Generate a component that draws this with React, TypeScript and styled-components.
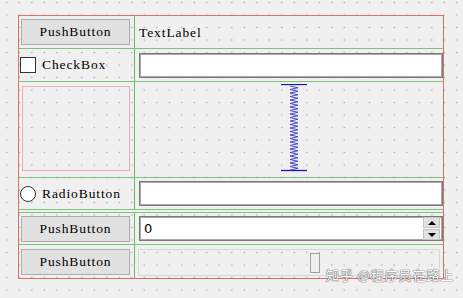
import { FunctionComponent } from "react";
import styled, { createGlobalStyle } from "styled-components";

const GlobalStyle = createGlobalStyle`
    html, body {
        margin: 0;
        padding: 0;
    }

    body {
        width: 463px;
        height: 298px;
        overflow: hidden;
        background-color: #f0f0f0;
        background-image: radial-gradient(circle, #b4b4b4 0.7px, transparent 1.1px);
        background-size: 12.5px 12.5px;
        background-position: 0.55px -3.75px;
        font-family: "Liberation Serif", "DejaVu Serif", serif;
        font-size: 13.5px;
        letter-spacing: 0.9px;
        color: #000000;
    }
`;

const Canvas = styled.div`
    position: relative;
    width: 463px;
    height: 298px;
    padding: 15px 0 0 18px;
    box-sizing: border-box;
`;

const FormLayout = styled.div`
    width: 426px;
    box-sizing: border-box;
    border: 1px solid #e06c6c;
    display: flex;
    flex-direction: column;
`;

const FormRow = styled.div<{ $height: number; $top?: boolean; $bottom?: boolean; $gap?: number }>`
    display: grid;
    grid-template-columns: 116px 1fr;
    height: ${p => p.$height}px;
    box-sizing: border-box;
    margin-top: ${p => p.$gap ?? 0}px;
    border-top: ${p => (p.$top ? "1px solid #7cc47c" : "none")};
    border-bottom: ${p => (p.$bottom ? "1px solid #7cc47c" : "none")};
`;

const LabelCell = styled.div<{ $padTop?: number }>`
    display: flex;
    align-items: ${p => (p.$padTop ? "flex-start" : "center")};
    padding: ${p => p.$padTop ?? 0}px 3px 0 2px;
    box-sizing: border-box;
    border-right: 1px solid #6ab86a;
`;

const FieldCell = styled.div<{ $padTop?: number; $center?: boolean }>`
    display: flex;
    align-items: ${p => (p.$padTop !== undefined ? "flex-start" : "center")};
    justify-content: ${p => (p.$center ? "center" : "flex-start")};
    padding-top: ${p => p.$padTop ?? 0}px;
    padding-left: 4px;
    box-sizing: border-box;
`;

const PushButton = styled.div`
    width: 109px;
    height: 26px;
    box-sizing: border-box;
    display: flex;
    align-items: center;
    justify-content: center;
    background: #e1e1e1;
    border: 1px solid #adadad;
`;

const TextLabel = styled.span`
    padding-top: 1px;
`;

const CheckRow = styled.label`
    display: flex;
    align-items: center;
    gap: 6px;
    margin-left: -1px;
`;

const CheckBox = styled.span`
    width: 16px;
    height: 16px;
    box-sizing: border-box;
    background: #ffffff;
    border: 1px solid #333333;
`;

const Radio = styled.span`
    width: 16px;
    height: 16px;
    box-sizing: border-box;
    background: #ffffff;
    border: 1px solid #333333;
    border-radius: 50%;
`;

const LineEdit = styled.div`
    flex: 1;
    height: 25px;
    box-sizing: border-box;
    background: #ffffff;
    border: 1px solid #7a7a7a;
    box-shadow: inset 0 0 0 1px #a9a9a9;
    display: flex;
    align-items: center;
    padding-left: 4px;
    font-family: "DejaVu Sans", sans-serif;
    font-size: 13px;
    letter-spacing: 0;
`;

const SpinBox = styled(LineEdit)`
    justify-content: space-between;
    padding-right: 2px;
`;

const SpinButtons = styled.div`
    display: flex;
    flex-direction: column;
    gap: 1px;
`;

const SpinArrow = styled.span<{ $down?: boolean }>`
    width: 15px;
    height: 9px;
    background: #e1e1e1;
    border: 1px solid #c4c4c4;
    display: flex;
    align-items: center;
    justify-content: center;

    &::after {
        content: "";
        border-left: 4px solid transparent;
        border-right: 4px solid transparent;
        border-bottom: ${p => (p.$down ? "none" : "4px solid #000")};
        border-top: ${p => (p.$down ? "4px solid #000" : "none")};
    }
`;

const EmptyLayout = styled.div`
    width: 108px;
    height: 85px;
    margin-left: 1px;
    box-sizing: border-box;
    border: 1px solid #efb0b0;
`;

const Slider = styled.div`
    flex: 1;
    height: 27px;
    margin: 0 3px 0 -1px;
    box-sizing: border-box;
    border: 1px solid #d8d8d8;
    display: flex;
    align-items: center;
    justify-content: center;
`;

const SliderHandle = styled.span`
    width: 10px;
    height: 20px;
    margin-left: 52px;
    box-sizing: border-box;
    border: 1px solid #a0a0a0;
    background: #f0f0f0;
`;

const Watermark = styled.div`
    position: absolute;
    left: 326px;
    top: 265px;
    font-family: "Noto Sans CJK SC", sans-serif;
    font-size: 13px;
    color: #ffffff;
    text-shadow: 0 0 1px #666666, 0 0 1px #666666, 0 0 1px #666666;
    white-space: nowrap;
`;

const VerticalSpacer: FunctionComponent = () => {
    const coils = [];
    for (let y = 2; y < 84; y += 3.5) {
        coils.push(`M9 ${y} L17 ${y + 1.75} L9 ${y + 3.5}`);
    }
    return (
        <svg width="26" height="88" viewBox="0 0 26 88" style={{ marginLeft: 6 }}>
            <line x1="0" y1="0.5" x2="26" y2="0.5" stroke="#1a1aa8" strokeWidth="1.3" />
            <line x1="0" y1="86.5" x2="26" y2="86.5" stroke="#1a1aa8" strokeWidth="1.3" />
            <path d={coils.join(" ")} fill="none" stroke="#3a3ac8" strokeWidth="0.9" />
        </svg>
    );
};

const App: FunctionComponent = () => (
    <Canvas>
        <GlobalStyle />
        <FormLayout>
            <FormRow $height={33} $bottom>
                <LabelCell><PushButton>PushButton</PushButton></LabelCell>
                <FieldCell><TextLabel>TextLabel</TextLabel></FieldCell>
            </FormRow>
            <FormRow $height={33} $bottom>
                <LabelCell>
                    <CheckRow><CheckBox />CheckBox</CheckRow>
                </LabelCell>
                <FieldCell><LineEdit /></FieldCell>
            </FormRow>
            <FormRow $height={96} $bottom>
                <LabelCell $padTop={4}><EmptyLayout /></LabelCell>
                <FieldCell $padTop={2} $center><VerticalSpacer /></FieldCell>
            </FormRow>
            <FormRow $height={32} $bottom>
                <LabelCell>
                    <CheckRow><Radio />RadioButton</CheckRow>
                </LabelCell>
                <FieldCell><LineEdit /></FieldCell>
            </FormRow>
            <FormRow $height={33} $top $bottom $gap={2}>
                <LabelCell><PushButton>PushButton</PushButton></LabelCell>
                <FieldCell>
                    <SpinBox>
                        0
                        <SpinButtons>
                            <SpinArrow />
                            <SpinArrow $down />
                        </SpinButtons>
                    </SpinBox>
                </FieldCell>
            </FormRow>
            <FormRow $height={33}>
                <LabelCell $padTop={4}><PushButton>PushButton</PushButton></LabelCell>
                <FieldCell $padTop={4}>
                    <Slider><SliderHandle /></Slider>
                </FieldCell>
            </FormRow>
        </FormLayout>
        <Watermark>知乎 @程序员在路上</Watermark>
    </Canvas>
);

export default App;
